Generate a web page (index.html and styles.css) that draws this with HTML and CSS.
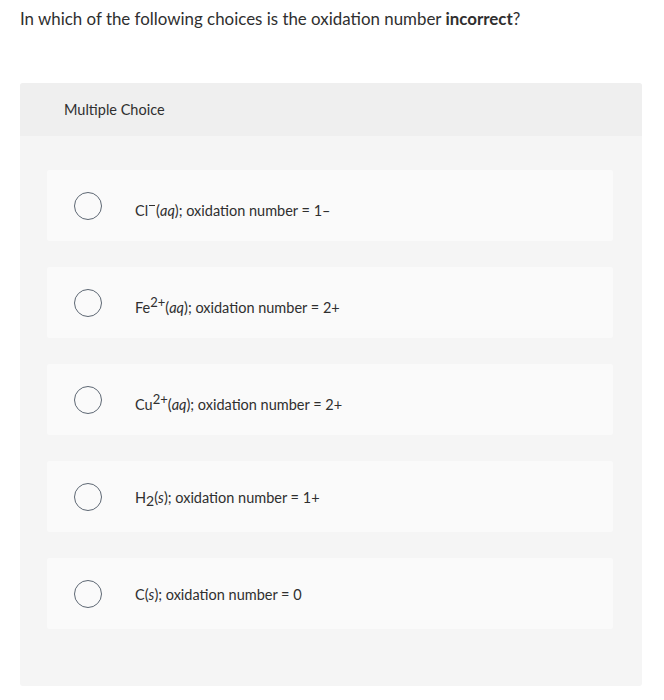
FILE: index.html
```html
<!DOCTYPE html>
<html>
<head>
<meta charset="utf-8">
<link rel="stylesheet" href="styles.css">
</head>
<body>
<p class="question">In which of the following choices is the oxidation number <b>incorrect</b>?</p>
<div class="card">
  <div class="card-head">Multiple Choice</div>
  <div class="card-body">
    <div class="option">
      <span class="radio"></span>
      <span class="label label-up">Cl<span class="minus"></span>(<i>aq</i>); oxidation number = 1&#8211;</span>
    </div>
    <div class="option">
      <span class="radio"></span>
      <span class="label label-up">Fe<sup>2+</sup>(<i>aq</i>); oxidation number = 2+</span>
    </div>
    <div class="option">
      <span class="radio"></span>
      <span class="label label-up">Cu<sup>2+</sup>(<i>aq</i>); oxidation number = 2+</span>
    </div>
    <div class="option">
      <span class="radio"></span>
      <span class="label">H<sub>2</sub>(<i>s</i>); oxidation number = 1+</span>
    </div>
    <div class="option">
      <span class="radio"></span>
      <span class="label">C(<i>s</i>); oxidation number = 0</span>
    </div>
  </div>
</div>
</body>
</html>
```
FILE: styles.css
```css
body {
  margin: 0;
  padding: 0 22px 0 20px;
  background: #fff;
  font-family: Lato, "Noto Sans", sans-serif;
  color: #2f2f2f;
}
.question {
  margin: 0;
  padding-top: 9px;
  font-size: 16.9px;
  line-height: 20px;
}
.question b {
  font-weight: 700;
}
.card {
  margin-top: 54px;
  background: #f5f5f5;
  border-radius: 3px;
}
.card-head {
  background: #efefef;
  height: 53px;
  display: flex;
  align-items: center;
  padding-left: 44px;
  font-size: 14.5px;
  border-radius: 3px 3px 0 0;
}
.card-body {
  padding: 34px 29px 57px 27px;
  display: flex;
  flex-direction: column;
  gap: 26px;
}
.option {
  background: #fafafa;
  height: 71px;
  display: flex;
  align-items: center;
  padding-left: 27px;
  border-radius: 2px;
}
.radio {
  width: 26px;
  height: 26px;
  border: 1.6px solid #5d6773;
  border-radius: 50%;
  flex: none;
}
.label {
  margin-left: 33px;
  font-size: 14.5px;
  line-height: 18px;
  padding-top: 2px;
}
.label-up {
  padding-top: 11px;
}
.label i {
  font-style: italic;
}
.minus {
  display: inline-block;
  width: 6px;
  height: 10px;
  margin: 0 1px 0 1px;
  border-top: 1.5px solid #2f2f2f;
  vertical-align: baseline;
}
sup {
  font-size: 13px;
  vertical-align: 6px;
  line-height: 0;
}
sub {
  font-size: 14px;
  vertical-align: -3px;
  line-height: 0;
}
```
